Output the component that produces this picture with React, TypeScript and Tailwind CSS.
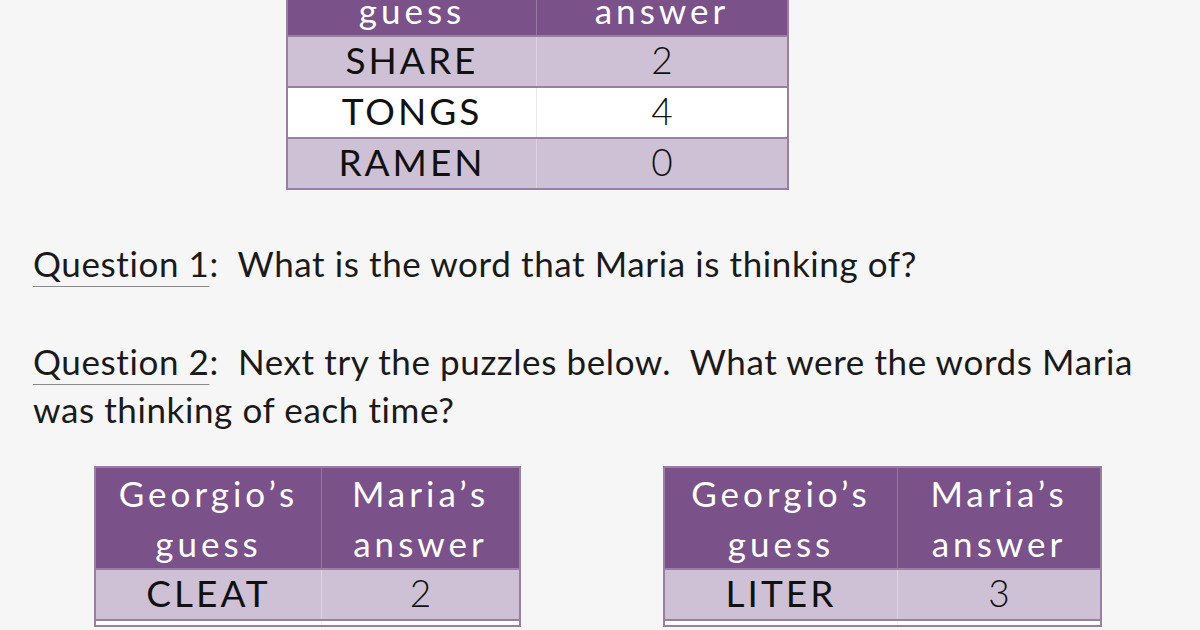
const font = { fontFamily: "Lato, 'Noto Sans', sans-serif" };

type Row = { guess: string; answer: string; shade: boolean };

const top: Row[] = [
  { guess: "SHARE", answer: "2", shade: true },
  { guess: "TONGS", answer: "4", shade: false },
  { guess: "RAMEN", answer: "0", shade: true },
];

function Header({ left }: { left: string }) {
  return (
    <div className="flex bg-[#7a5189] text-white text-[35px] leading-[50px] tracking-[4px] text-center">
      <div className={"border-r border-[#9577a2] " + left}>
        <div>Georgio’s</div>
        <div>guess</div>
      </div>
      <div className="flex-1">
        <div>Maria’s</div>
        <div>answer</div>
      </div>
    </div>
  );
}

function DataRow({ guess, answer, shade, left }: Row & { left: string }) {
  return (
    <div
      className={
        "flex border-t-2 border-[#9a7fa4] text-[#111] text-[37px] leading-[45px] text-center " +
        (shade ? "bg-[#cfc1d5]" : "bg-white")
      }
    >
      <div className={"tracking-[3px] border-r pb-[4px] " + left + (shade ? " border-[#ddd2e1]" : " border-[#eee8f0]")}>
        {guess}
      </div>
      <div className="flex-1 font-light pb-[4px]">{answer}</div>
    </div>
  );
}

function Table({ rows, className, left }: { rows: Row[]; className: string; left: string }) {
  return (
    <div className={"border-2 border-[#9a7fa4] " + className}>
      <Header left={left} />
      {rows.map((r, i) => (
        <DataRow key={i} {...r} left={left} />
      ))}
    </div>
  );
}

export default function App() {
  return (
    <div className="w-[1200px] h-[630px] overflow-hidden bg-[#f7f6f6] text-[#1a1a1a]" style={font}>
      <Table rows={top} left="w-[249px]" className="ml-[286px] w-[503px] mt-[-67px]" />

      <div className="pl-[33px] pt-[49px] text-[35px] leading-[48px] tracking-[0.6px]">
        <p>
          <span className="underline underline-offset-[9px] decoration-[1px] decoration-[#8a8a8a]">Question 1</span>:&nbsp;&nbsp;What is the word that Maria is thinking of?
        </p>
        <p className="mt-[50px]">
          <span className="underline underline-offset-[9px] decoration-[1px] decoration-[#8a8a8a]">Question 2</span>:&nbsp;&nbsp;Next try the puzzles below.&nbsp;&nbsp;What were the words Maria
          <br />
          was thinking of each time?
        </p>
      </div>

      <div className="flex mt-[33px]">
        <Table
          rows={[
            { guess: "CLEAT", answer: "2", shade: true },
            { guess: "", answer: "", shade: false },
          ]}
          left="w-[226px]"
          className="ml-[94px] w-[427px]"
        />
        <Table
          rows={[
            { guess: "LITER", answer: "3", shade: true },
            { guess: "", answer: "", shade: false },
          ]}
          left="w-[233px]"
          className="ml-[142px] w-[439px]"
        />
      </div>
    </div>
  );
}
